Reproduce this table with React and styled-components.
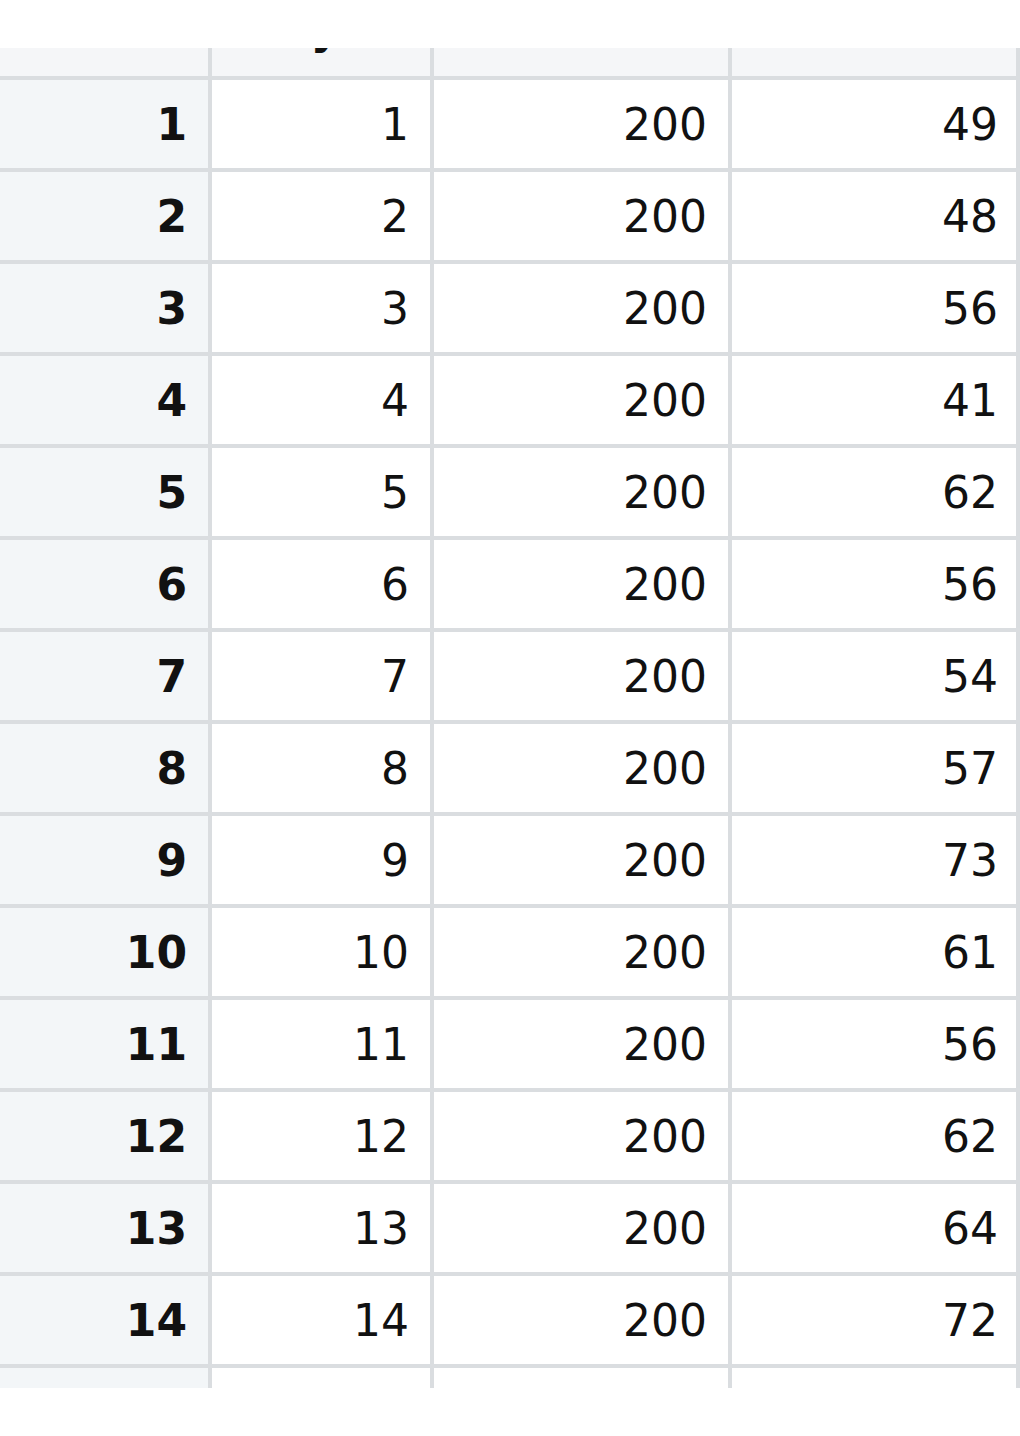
import React from 'react';
import styled, { createGlobalStyle } from 'styled-components';

const scores = [49, 48, 56, 41, 62, 56, 54, 57, 73, 61, 56, 62, 64, 72];

const GlobalStyle = createGlobalStyle`
  html, body {
    margin: 0;
    padding: 0;
    background: #ffffff;
  }
  body {
    font-family: "DejaVu Sans", Verdana, sans-serif;
    color: #111;
  }
`;

const Page = styled.div`
  padding-top: 48px;
  width: 1020px;
`;

const Viewport = styled.div`
  height: 1340px;
  overflow: hidden;
`;

const Grid = styled.div`
  display: grid;
  grid-template-columns: 208px 218px 294px 284px;
  grid-template-rows: 28px;
  grid-auto-rows: 88px;
  gap: 4px;
  padding-right: 4px;
  background: #dadde0;
`;

const HeadCell = styled.div`
  background: #f5f6f8;
  overflow: hidden;
  display: flex;
  align-items: flex-start;
  padding-left: ${(p) => p.$indent || 0}px;
`;

const HeadLabel = styled.span`
  font-size: 44px;
  line-height: 44px;
  font-weight: 700;
  margin-top: -41px;
  white-space: nowrap;
`;

const Cell = styled.div`
  background: ${(p) => (p.$index ? '#f3f6f8' : '#ffffff')};
  font-weight: ${(p) => (p.$index ? 700 : 400)};
  font-size: 44px;
  display: flex;
  align-items: center;
  justify-content: flex-end;
  padding-right: ${(p) => p.$pad || 21}px;
`;

const App = () => {
  return (
    <React.Fragment>
      <GlobalStyle />
      <Page>
        <Viewport>
          <Grid>
            <HeadCell />
            <HeadCell $indent={34}>
              <HeadLabel>Day</HeadLabel>
            </HeadCell>
            <HeadCell />
            <HeadCell />
            {scores.map((s, i) => (
              <React.Fragment key={i}>
                <Cell $index>{i + 1}</Cell>
                <Cell>{i + 1}</Cell>
                <Cell>200</Cell>
                <Cell $pad={18}>{s}</Cell>
              </React.Fragment>
            ))}
            <Cell $index />
            <Cell />
            <Cell />
            <Cell />
          </Grid>
        </Viewport>
      </Page>
    </React.Fragment>
  );
};

export default App;
